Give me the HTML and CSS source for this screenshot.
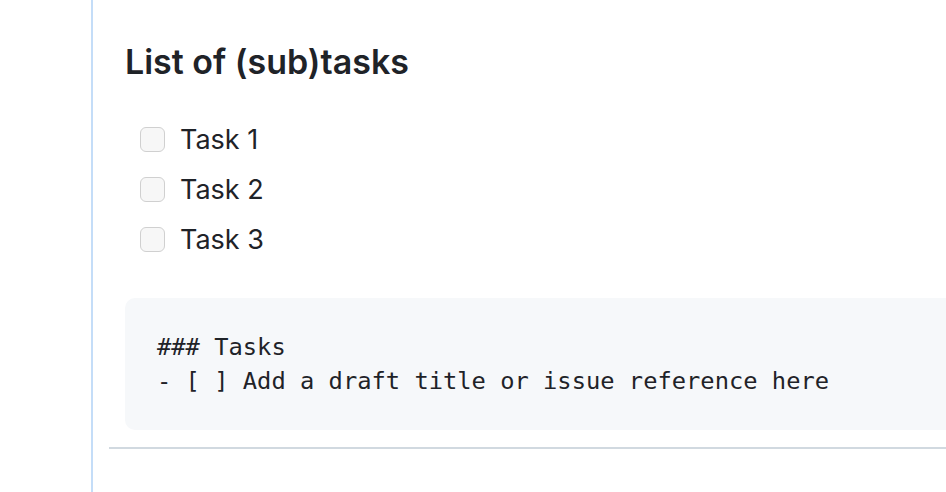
FILE: index.html
```html
<!DOCTYPE html>
<html lang="en">
<head>
<meta charset="utf-8">
<title>List of (sub)tasks</title>
<link rel="stylesheet" href="styles.css">
</head>
<body>
<div class="thread">
  <div class="comment-body">
    <h3 class="heading">List of (sub)tasks</h3>
    <ul class="task-list">
      <li class="task-item"><span class="checkbox"></span><span class="task-label">Task 1</span></li>
      <li class="task-item"><span class="checkbox"></span><span class="task-label">Task 2</span></li>
      <li class="task-item"><span class="checkbox"></span><span class="task-label">Task 3</span></li>
    </ul>
    <pre class="code-block">### Tasks
- [ ] Add a draft title or issue reference here</pre>
  </div>
  <hr class="divider">
</div>
</body>
</html>
```

FILE: styles.css
```css
html, body {
  margin: 0;
  padding: 0;
  background: #ffffff;
  overflow: hidden;
}

body {
  font-family: Inter, "Liberation Sans", sans-serif;
  color: #1f2328;
}

.thread {
  margin-left: 91px;
  border-left: 2px solid #c4ddf8;
  min-height: 492px;
  padding-top: 1px;
  box-sizing: border-box;
}

.comment-body {
  padding-left: 32px;
}

.heading {
  margin: 39px 0 0 0;
  font-size: 34px;
  font-weight: 600;
  line-height: 44px;
}

.task-list {
  list-style: none;
  margin: 30.5px 0 0 0;
  padding: 0 0 0 15px;
}

.task-item {
  display: flex;
  align-items: center;
  height: 50px;
  font-size: 27px;
}

.checkbox {
  width: 23px;
  height: 23px;
  border: 1px solid #d0d0d0;
  border-radius: 6px;
  background: #f7f7f7;
  margin-right: 15px;
  flex: none;
}

.code-block {
  margin: 33.5px 0 0 0;
  padding: 32px;
  background: #f6f8fa;
  border-radius: 10px 0 0 10px;
  font-family: "DejaVu Sans Mono", monospace;
  font-size: 23.75px;
  line-height: 34px;
  color: #1f2328;
}

.divider {
  margin: 17px 0 0 16px;
  border: 0;
  height: 2px;
  background: #d1d9e0;
}
```
